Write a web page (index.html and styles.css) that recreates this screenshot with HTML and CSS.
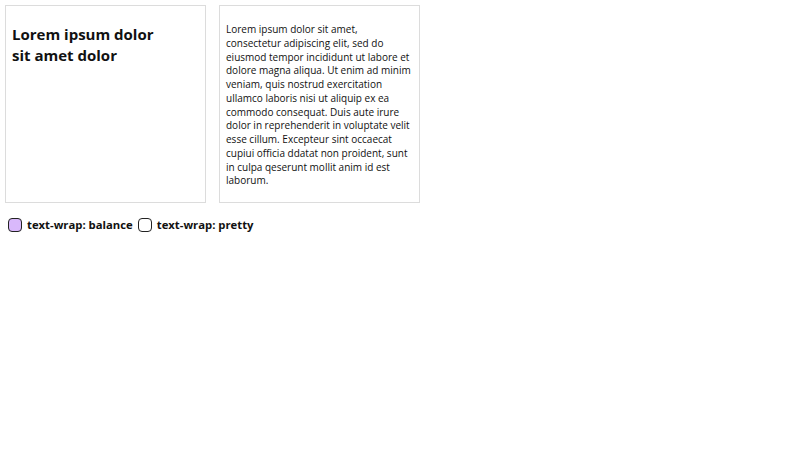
FILE: index.html
```html
<!DOCTYPE html>
<html>
<head>
<meta charset="utf-8">
<link rel="stylesheet" href="styles.css">
</head>
<body>
<div class="cards">
  <div class="card">
    <h2 class="title">Lorem ipsum dolor sit amet dolor</h2>
  </div>
  <div class="card">
    <p class="body">Lorem ipsum dolor sit amet, consectetur adipiscing elit, sed do eiusmod tempor incididunt ut labore et dolore magna aliqua. Ut enim ad minim veniam, quis nostrud exercitation ullamco laboris nisi ut aliquip ex ea commodo consequat. Duis aute irure dolor in reprehenderit in voluptate velit esse cillum. Excepteur sint occaecat cupiui officia ddatat non proident, sunt in culpa qeserunt mollit anim id est laborum.</p>
  </div>
</div>
<div class="controls">
  <label class="opt"><span class="box checked"></span>text-wrap: balance</label>
  <label class="opt"><span class="box"></span>text-wrap: pretty</label>
</div>
</body>
</html>
```
FILE: styles.css
```css
html, body { margin: 0; padding: 0; background: #fff; }
body {
  font-family: "Open Sans", sans-serif;
  color: #111;
  padding: 5px;
}
.cards {
  display: flex;
  gap: 13px;
}
.card {
  width: 201px;
  height: 198px;
  box-sizing: border-box;
  border: 1px solid #dcdcdc;
  padding: 6px;
}
.title {
  margin: 12px 0 0 0;
  font-size: 15px;
  font-weight: 700;
  line-height: 21px;
  text-wrap: balance;
}
.body {
  margin: 11px 0 0 0;
  font-size: 10px;
  line-height: 13.75px;
}
.controls {
  display: flex;
  align-items: center;
  gap: 5px;
  margin-top: 14px;
  padding-left: 3px;
}
.opt {
  display: flex;
  align-items: center;
  gap: 5px;
  font-size: 11.3px;
  font-weight: 700;
}
.box {
  width: 12px;
  height: 12px;
  border: 1.5px solid #222;
  border-radius: 4px;
  background: #fff;
}
.box.checked { background: #d9b8fb; }
```
